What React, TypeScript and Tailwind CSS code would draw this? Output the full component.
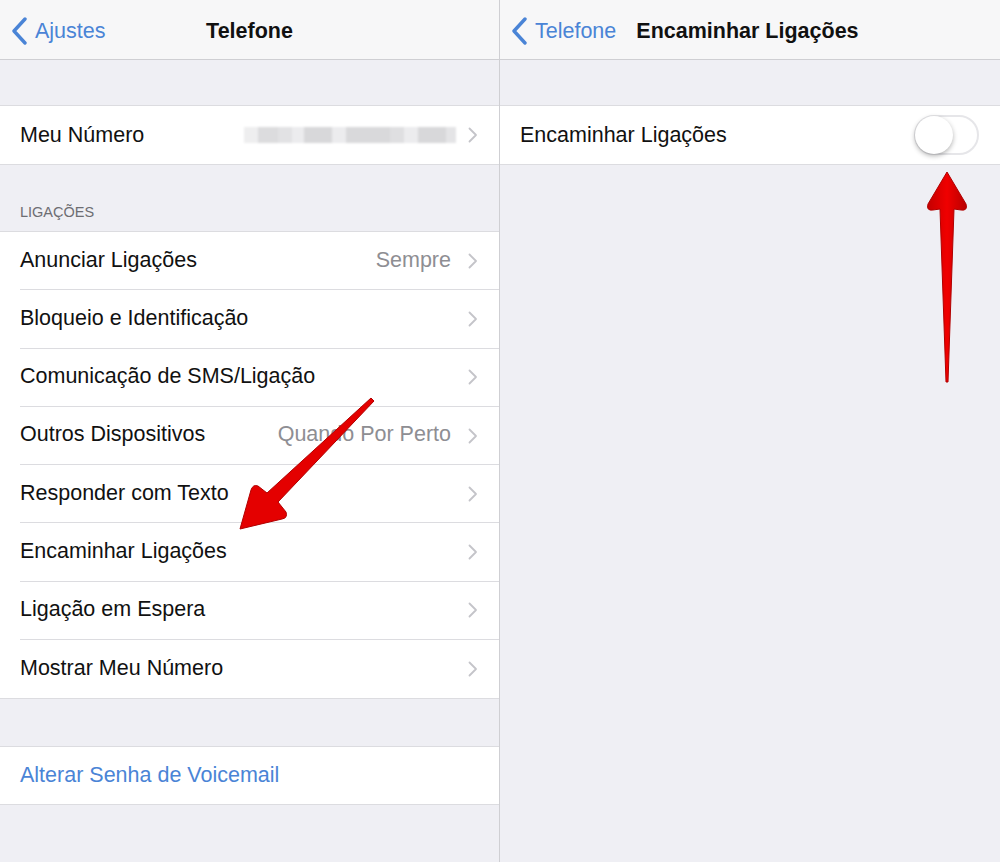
import React from "react";

const font = { fontFamily: '"Liberation Sans", Arial, sans-serif' };

function Chevron() {
  return (
    <svg width="10" height="16" viewBox="0 0 10 16" className="shrink-0">
      <polyline points="1.5,1.5 8,8 1.5,14.5" fill="none" stroke="#c4c4c9" strokeWidth="1.8" strokeLinecap="round" strokeLinejoin="round" />
    </svg>
  );
}

function BackChevron() {
  return (
    <svg width="18" height="28" viewBox="0 0 18 28" className="shrink-0">
      <polyline points="14,2 3,14 14,26" fill="none" stroke="#4a84d6" strokeWidth="3.4" strokeLinecap="round" strokeLinejoin="round" />
    </svg>
  );
}

type Row = { label: string; detail?: string };

function Cell({ label, detail, last }: Row & { last?: boolean }) {
  return (
    <div className="flex h-[58.3px] pl-5">
      <div className={`flex flex-1 items-center pr-[21px] ${last ? "" : "border-b border-[#dcdce0]"}`}>
        <span className="-mt-[2px] flex-1 text-[21.5px] text-[#111]">{label}</span>
        {detail ? <span className="-mt-[2px] mr-[17px] text-[21.5px] text-[#8e8e93]">{detail}</span> : null}
        <Chevron />
      </div>
    </div>
  );
}

const calls: Row[] = [
  { label: "Anunciar Ligações", detail: "Sempre" },
  { label: "Bloqueio e Identificação" },
  { label: "Comunicação de SMS/Ligação" },
  { label: "Outros Dispositivos", detail: "Quando Por Perto" },
  { label: "Responder com Texto" },
  { label: "Encaminhar Ligações" },
  { label: "Ligação em Espera" },
  { label: "Mostrar Meu Número" },
];

function NavBar({ back, title, centered }: { back: string; title: string; centered?: boolean }) {
  return (
    <div className="relative flex h-[60px] items-center border-b border-[#cfcfd3] bg-[#f7f7f8] pl-[11px] pt-[3px]">
      <div className="flex items-center gap-[6px] text-[21.5px] text-[#4a84d6]">
        <BackChevron />
        <span>{back}</span>
      </div>
      {centered ? (
        <div className="absolute inset-0 flex items-center justify-center pt-[3px] text-[21.5px] font-bold text-[#111]">{title}</div>
      ) : (
        <span className="ml-[20px] text-[21.5px] font-bold text-[#111]">{title}</span>
      )}
    </div>
  );
}

function BlurredNumber() {
  const blocks = [
    [0, 14, "#eeeeef"], [14, 20, "#dcdcde"], [34, 14, "#e2e2e4"], [48, 12, "#ececee"], [60, 28, "#d8d8da"],
    [88, 14, "#ececee"], [102, 44, "#d9d9db"], [146, 14, "#dfdfe1"], [160, 14, "#ececee"], [174, 28, "#d8d8da"], [202, 10, "#e4e4e6"],
  ] as const;
  return (
    <div className="relative mr-[14px] h-[16px] w-[210px] blur-[1px]">
      {blocks.map(([l, w, c], i) => (
        <div key={i} className="absolute top-0 h-[16px]" style={{ left: l, width: w, background: c }} />
      ))}
    </div>
  );
}

function Arrows() {
  return (
    <svg className="pointer-events-none absolute inset-0" width="1000" height="862" viewBox="0 0 1000 862">
      <defs>
        <linearGradient id="rg" x1="0" x2="1" y1="0" y2="0">
          <stop offset="0" stopColor="#c40000" />
          <stop offset="0.5" stopColor="#f00000" />
          <stop offset="1" stopColor="#b80000" />
        </linearGradient>
      </defs>
      {/* diagonal arrow */}
      <path
        d="M371 398 L374 401 L278 502 L286 512 Q288 518 282 519 L240 529 L251 490 Q253 484 258 486 L267 493 Z"
        fill="#e40000"
        stroke="#b00000"
        strokeWidth="1"
        strokeLinejoin="round"
      />
      {/* vertical arrow */}
      <path
        d="M947 172 L966 204 Q968 211 961 210 L954 209 L948 382 L946 382 L940 209 L933 210 Q926 211 928 204 Z"
        fill="url(#rg)"
        stroke="#b00000"
        strokeWidth="1"
        strokeLinejoin="round"
      />
    </svg>
  );
}

export default function App() {
  return (
    <div className="relative flex h-[862px] w-[1000px] overflow-hidden bg-[#efeff4]" style={font}>
      {/* left panel */}
      <div className="flex w-[500px] flex-col border-r border-[#cfcfd3]">
        <NavBar back="Ajustes" title="Telefone" centered />
        <div className="h-[45px]" />
        <div className="flex h-[60px] items-center border-y border-[#dcdce0] bg-white pl-5 pr-[21px]">
          <span className="flex-1 text-[21.5px] text-[#111]">Meu Número</span>
          <BlurredNumber />
          <Chevron />
        </div>
        <div className="flex h-[66px] items-end pb-[7px] pl-5 text-[14.5px] text-[#6d6d72]">LIGAÇÕES</div>
        <div className="border-y border-[#dcdce0] bg-white">
          {calls.map((r, i) => (
            <Cell key={r.label} {...r} last={i === calls.length - 1} />
          ))}
        </div>
        <div className="h-[47px]" />
        <div className="flex h-[59px] items-center border-y border-[#dcdce0] bg-white pl-5">
          <span className="-mt-[2px] text-[21.5px] text-[#4a84d6]">Alterar Senha de Voicemail</span>
        </div>
      </div>

      {/* right panel */}
      <div className="flex flex-1 flex-col">
        <NavBar back="Telefone" title="Encaminhar Ligações" />
        <div className="h-[45px]" />
        <div className="flex h-[60px] items-center border-y border-[#dcdce0] bg-white pl-5 pr-[21px]">
          <span className="flex-1 text-[21.5px] text-[#111]">Encaminhar Ligações</span>
          <div className="relative h-[40px] w-[65px] rounded-full border-2 border-[#e6e6e9] bg-white">
            <div className="absolute left-[-1px] top-[-1px] h-[38px] w-[38px] rounded-full bg-white shadow-[0_2px_5px_rgba(0,0,0,0.3)]" />
          </div>
        </div>
      </div>

      <Arrows />
    </div>
  );
}
